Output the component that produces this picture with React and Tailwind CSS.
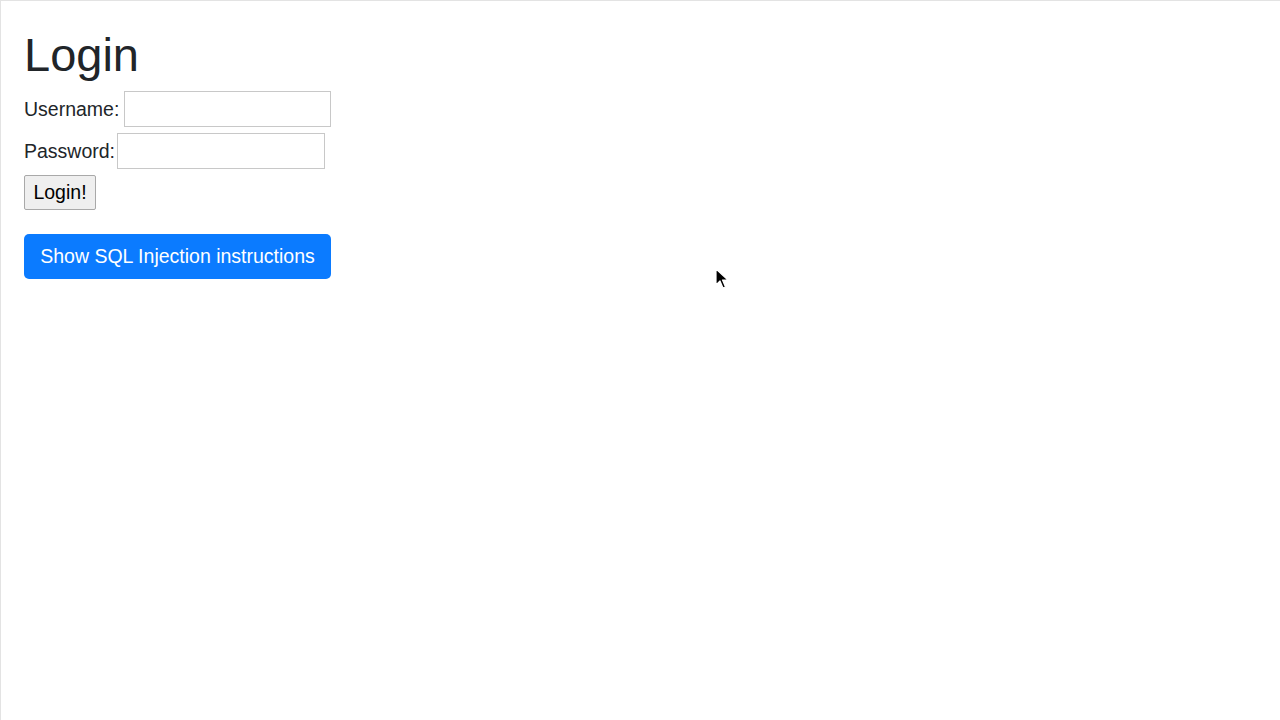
export default function App() {
    return (
        <div className="relative min-h-screen border-t border-l border-[#e3e3e3] bg-white pl-[23px] pt-[24px] text-[#212529] font-['Liberation_Sans',Arial,sans-serif]">
            <h1 className="text-[47px] leading-[59px] font-normal">Login</h1>

            <form className="mt-[7px] flex flex-col gap-[6px] text-[19.5px]">
                <div className="flex items-center gap-[5px]">
                    <label className="pt-[2px]">Username:</label>
                    <input type="text" className="h-[36px] w-[207px] border border-[#c8c8c8] bg-white" />
                </div>
                <div className="flex items-center gap-[2px]">
                    <label className="pt-[2px]">Password:</label>
                    <input type="password" className="h-[36px] w-[208px] border border-[#c8c8c8] bg-white" />
                </div>
                <div>
                    <button type="button" className="h-[35px] w-[72px] rounded-[2px] border border-[#a9a9a9] bg-[#efefef] text-[19.5px] text-black">
                        Login!
                    </button>
                </div>
            </form>

            <button className="mt-[24px] flex h-[45px] w-[307px] items-center justify-center rounded-[5px] bg-[#0b7bff] text-[19.5px] text-white">
                Show SQL Injection instructions
            </button>

            {/* mouse pointer */}
            <svg className="absolute left-[714px] top-[267px]" width="14" height="22" viewBox="0 0 14 22">
                <path d="M1 1 L1 17 L5 13 L8 20 L10.5 19 L7.5 12 L13 12 Z" fill="#000" stroke="#fff" strokeWidth="1.2" strokeLinejoin="round" />
            </svg>
        </div>
    );
}
